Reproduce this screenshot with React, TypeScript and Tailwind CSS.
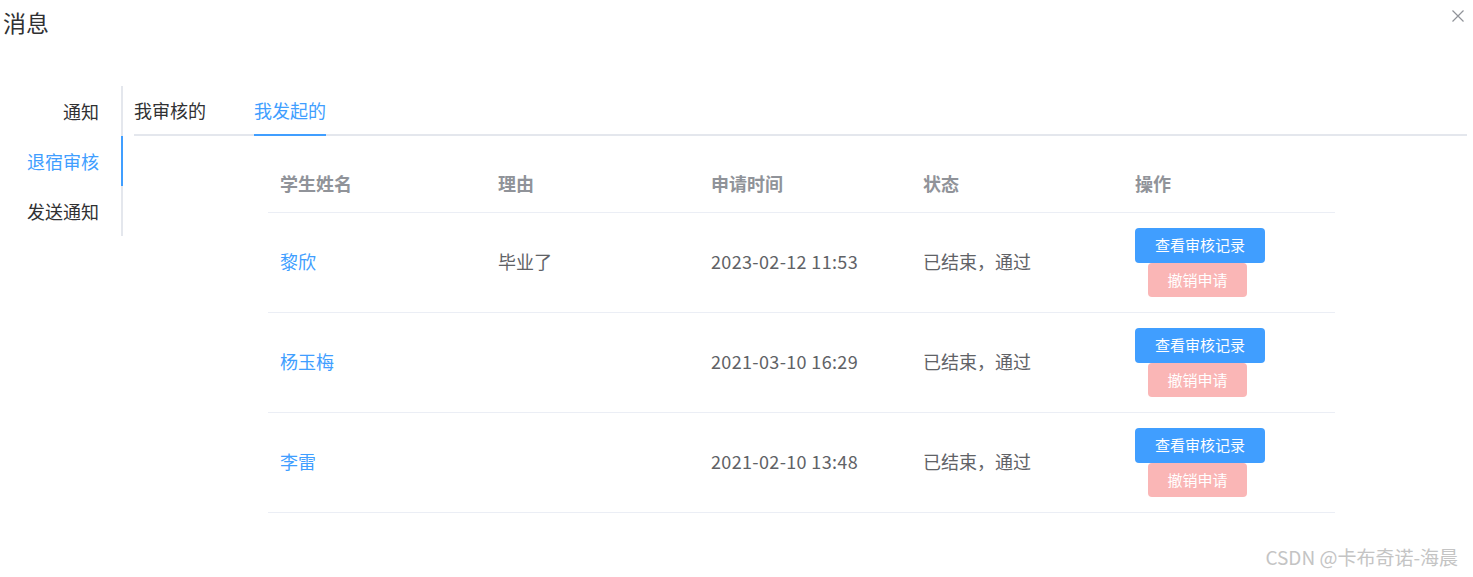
import React from 'react';

type Row = { name: string; reason: string; time: string; status: string };

const rows: Row[] = [
    { name: '黎欣', reason: '毕业了', time: '2023-02-12 11:53', status: '已结束，通过' },
    { name: '杨玉梅', reason: '', time: '2021-03-10 16:29', status: '已结束，通过' },
    { name: '李雷', reason: '', time: '2021-02-10 13:48', status: '已结束，通过' },
];

const font = { fontFamily: '"Noto Sans CJK SC", "Noto Sans", sans-serif' };

export default function App() {
    return (
        <div className="relative w-[1473px] h-[577px] bg-white overflow-hidden" style={font}>
            {/* Header */}
            <div className="flex items-start justify-between h-[86px]">
                <span className="ml-[3px] mt-[7px] text-[23px] leading-[30px] text-[#303133]">消息</span>
                <button className="mt-[10px] mr-[9px] w-3 h-3 text-[#909399]">
                    <svg width="12" height="12" viewBox="0 0 12 12" fill="none" stroke="currentColor" strokeWidth="1.2">
                        <path d="M0.5 0.5 L11.5 11.5 M11.5 0.5 L0.5 11.5" />
                    </svg>
                </button>
            </div>

            <div className="flex">
                {/* Left tabs */}
                <div className="flex flex-col w-[123px] self-start border-r-2 border-[#E4E7ED]">
                    <SideTab label="通知" />
                    <SideTab label="退宿审核" active />
                    <SideTab label="发送通知" />
                </div>

                {/* Content */}
                <div className="flex-1 ml-[11px] mr-[6px]">
                    <div className="flex gap-[48px] h-[50px] border-b-2 border-[#E4E7ED] text-[18px]">
                        <div className="flex items-center h-[48px] text-[#303133]">我审核的</div>
                        <div className="relative flex items-center h-[48px] text-[#409EFF]">
                            我发起的
                            <div className="absolute left-0 right-0 -bottom-[2px] h-[2px] bg-[#409EFF]" />
                        </div>
                    </div>

                    {/* Table */}
                    <div className="w-[1067px] ml-[134px] mt-[20px] text-[18px]">
                        <div className="grid grid-cols-[230px_213px_212px_212px_1fr] h-[57px] pb-[2px] items-center border-b border-[#EBEEF5] font-bold text-[#909399]">
                            <div className="pl-[12px]">学生姓名</div>
                            <div>理由</div>
                            <div>申请时间</div>
                            <div>状态</div>
                            <div>操作</div>
                        </div>
                        {rows.map((r) => (
                            <div
                                key={r.name}
                                className="grid grid-cols-[230px_213px_212px_212px_1fr] h-[100px] items-center border-b border-[#EBEEF5] text-[#606266]"
                            >
                                <div className="pl-[12px] pb-[2px] text-[#409EFF]">{r.name}</div>
                                <div className="pb-[2px]">{r.reason}</div>
                                <div className="pb-[2px] tracking-[0.35px]">{r.time}</div>
                                <div className="pb-[2px]">{r.status}</div>
                                <div className="flex flex-col items-start">
                                    <button className="w-[130px] h-[35px] rounded bg-[#409EFF] text-white text-[15px]">查看审核记录</button>
                                    <button className="ml-[13px] w-[99px] h-[34px] rounded bg-[#FAB6B6] text-white text-[15px]">撤销申请</button>
                                </div>
                            </div>
                        ))}
                    </div>
                </div>
            </div>

            <div className="absolute right-[15px] bottom-[8px] text-[19px] text-[#C4C4C4] leading-[24px]">
                CSDN @卡布奇诺-海晨
            </div>
        </div>
    );
}

function SideTab({ label, active }: { label: string; active?: boolean }) {
    return (
        <div className="relative flex items-center justify-end h-[50px] pr-[22px] text-[18px]">
            <span className={active ? 'text-[#409EFF]' : 'text-[#303133]'}>{label}</span>
            {active && <div className="absolute -right-[2px] top-0 bottom-0 w-[2px] bg-[#409EFF]" />}
        </div>
    );
}
